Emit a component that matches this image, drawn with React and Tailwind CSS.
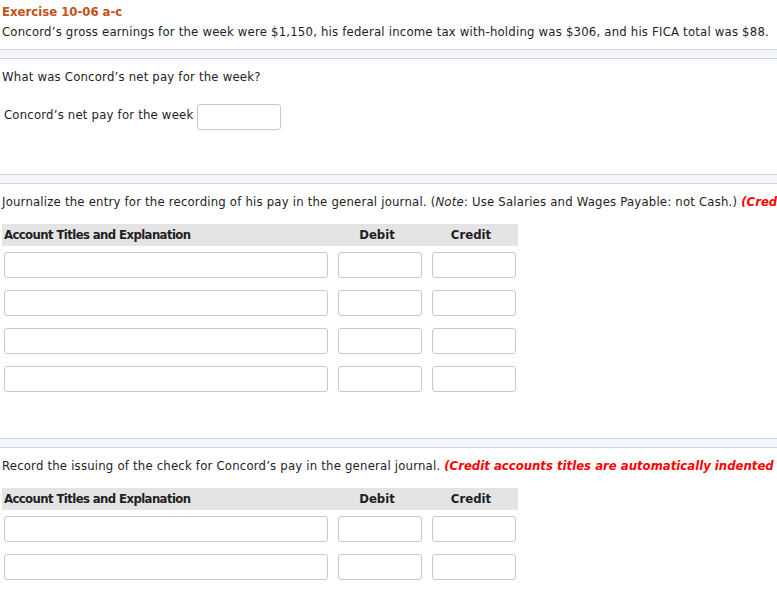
export default function App() {
  const Band = ({ className = "" }) => (
    <div className={`h-[10px] border-y border-[#cfd5de] bg-[#f4f6f9] ${className}`} />
  );

  const Box = ({ w }) => (
    <div className={`${w} h-[26px] shrink-0 rounded-[3px] border border-[#c8c8c8] bg-white`} />
  );

  const Line = ({ className = "", children }) => (
    <div className={`h-[20px] whitespace-nowrap leading-[22px] ${className}`}>{children}</div>
  );

  const Journal = ({ rows }) => (
    <div>
      <div className="mx-[2px] mt-[13px] flex h-[22px] w-[516px] items-center bg-[#e4e4e4] font-bold tracking-normal">
        <div className="w-[336px] pl-[2px] tracking-[-0.6px]">Account Titles and Explanation</div>
        <div className="w-[84px] text-center -ml-[3px]">Debit</div>
        <div className="ml-[10px] w-[84px] text-center">Credit</div>
      </div>
      <div className="mt-[6px] flex flex-col gap-[12px] pl-[4px]">
        {Array.from({ length: rows }).map((_, i) => (
          <div key={i} className="flex gap-[10px]">
            <Box w="w-[324px]" />
            <Box w="w-[84px]" />
            <Box w="w-[84px]" />
          </div>
        ))}
      </div>
    </div>
  );

  const note = "(Credit accounts titles are automatically indented when amount is entered. Do not indent manually.)";

  return (
    <div className="h-[614px] w-[777px] overflow-hidden bg-white text-[13px] leading-[20px] tracking-[0.2px] text-[#1e1e24] [font-family:'DejaVu_Sans_Condensed','DejaVu_Sans',sans-serif]">
      <div className="px-[2px] pt-[1px]">
        <Line className="font-bold tracking-normal text-[#c4501a]">Exercise 10-06 a-c</Line>
        <Line>
          Concord’s gross earnings for the week were $1,150, his federal income tax with-holding was $306, and his FICA total was $88.
        </Line>
      </div>

      <Band className="mt-[8px]" />

      <Line className="mt-[7px] px-[2px]">What was Concord’s net pay for the week?</Line>
      <div className="mt-[18px] flex items-start gap-[4px] pl-[4px]">
        <Line>Concord’s net pay for the week</Line>
        <Box w="w-[84px]" />
      </div>

      <Band className="mt-[44px]" />

      <Line className="mt-[7px] px-[2px]">
        Journalize the entry for the recording of his pay in the general journal. (<i>Note</i>: Use Salaries and Wages Payable: not Cash.){" "}
        <b className="italic tracking-normal text-[#ff0000]">{note}</b>
      </Line>
      <Journal rows={4} />

      <Band className="mt-[46px]" />

      <Line className="mt-[7px] px-[2px]">
        Record the issuing of the check for Concord’s pay in the general journal.{" "}
        <b className="italic tracking-normal text-[#ff0000]">{note}</b>
      </Line>
      <Journal rows={2} />
    </div>
  );
}
